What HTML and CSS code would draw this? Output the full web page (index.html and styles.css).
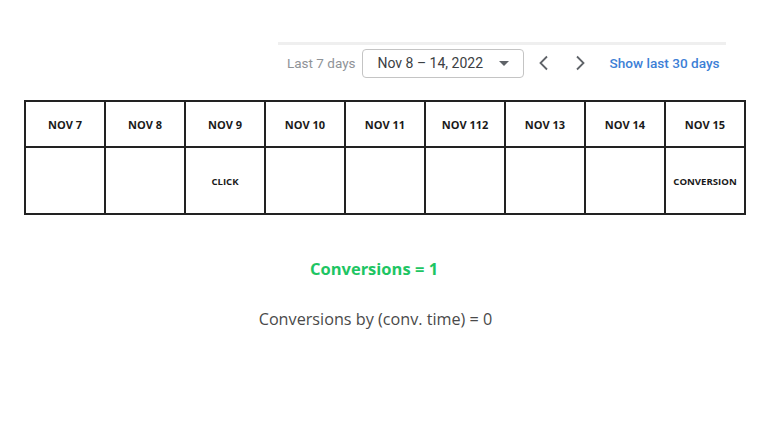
FILE: index.html
```html
<!DOCTYPE html>
<html>
<head>
<meta charset="utf-8">
<link rel="stylesheet" href="styles.css">
</head>
<body>
<div class="toolbar">
  <span class="range-label">Last 7 days</span>
  <div class="picker">
    <span class="picker-text">Nov 8 – 14, 2022</span>
    <svg class="caret" width="10" height="5" viewBox="0 0 10 5"><path d="M0 0h10L5 5z" fill="#5f6368"/></svg>
  </div>
  <svg class="chev" width="14" height="16" viewBox="0 0 14 16"><path d="M10 1.5L3.5 8l6.5 6.5" fill="none" stroke="#5f6368" stroke-width="1.8"/></svg>
  <svg class="chev" width="14" height="16" viewBox="0 0 14 16"><path d="M4 1.5L10.5 8 4 14.5" fill="none" stroke="#5f6368" stroke-width="1.8"/></svg>
  <a class="show-link">Show last 30 days</a>
</div>
<table class="days">
  <tr class="head">
    <td>NOV 7</td><td>NOV 8</td><td>NOV 9</td><td>NOV 10</td><td>NOV 11</td><td>NOV 112</td><td>NOV 13</td><td>NOV 14</td><td>NOV 15</td>
  </tr>
  <tr class="body">
    <td></td><td></td><td>CLICK</td><td></td><td></td><td></td><td></td><td></td><td>CONVERSION</td>
  </tr>
</table>
<div class="result-green">Conversions = 1</div>
<div class="result-gray">Conversions by (conv. time) = 0</div>
</body>
</html>
```
FILE: styles.css
```css
html, body { margin: 0; padding: 0; background: #fff; }
body { width: 768px; height: 431px; overflow: hidden; font-family: "Open Sans", sans-serif; }
.toolbar {
  margin: 42px 0 0 278px;
  width: 448px;
  border-top: 3px solid #efefef;
  display: flex;
  align-items: center;
  padding-top: 3px;
  height: 30px;
  font-family: Roboto, "Liberation Sans", sans-serif;
}
.range-label { color: #8f9398; font-size: 13.5px; margin-left: 9px; }
.picker {
  margin-left: 6px;
  width: 162px;
  height: 29px;
  border: 1px solid #c4c4c4;
  border-radius: 4px;
  display: flex;
  align-items: center;
  box-sizing: border-box;
  padding: 0 14px 0 15px;
}
.picker-text { color: #3c4043; font-size: 14px; flex: 1; }
.caret { display: block; }
.chev { margin-left: 13px; display: block; }
.chev + .chev { margin-left: 22px; }
.show-link { color: #3d7fd6; font-size: 13.6px; margin-left: 23px; font-weight: 500; }
.days {
  margin: 22px 0 0 24px;
  width: 722px;
  border-collapse: collapse;
  table-layout: fixed;
}
.days td {
  border: 2px solid #222;
  text-align: center;
  font-weight: 700;
  color: #1a1a1a;
  padding: 0;
}
.head td { height: 44px; font-size: 11px; }
.body td { height: 63px; font-size: 9.6px; padding-top: 2px; }
.result-green {
  margin-top: 42px;
  text-align: center;
  width: 748px;
  color: #1ec563;
  font-weight: 700;
  font-size: 16.5px;
  line-height: 24px;
}
.result-gray {
  margin-top: 27px;
  text-align: center;
  width: 751px;
  color: #4a4a4a;
  font-size: 16.2px;
  line-height: 22px;
}
```
